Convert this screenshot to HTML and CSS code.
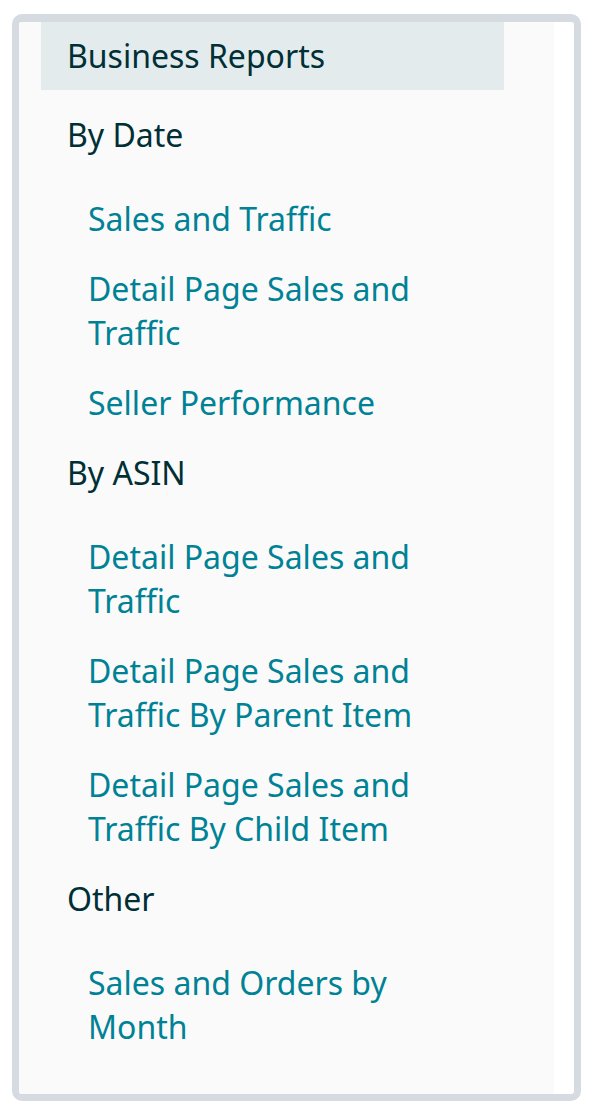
FILE: index.html
```html
<!DOCTYPE html>
<html lang="en">
<head>
    <meta charset="UTF-8">
    <meta name="viewport" content="width=device-width, initial-scale=1.0">
    <title>Business Reports</title>
    <link rel="stylesheet" href="styles.css">
</head>
<body>
    <div class="frame">
        <div class="panel">
            <div class="panel-title">Business Reports</div>

            <div class="groups">
                <div class="group">
                    <h3 class="group-title">By Date</h3>
                    <ul class="links">
                        <li><a href="#">Sales and Traffic</a></li>
                        <li><a href="#">Detail Page Sales and Traffic</a></li>
                        <li><a href="#">Seller Performance</a></li>
                    </ul>
                </div>

                <div class="group">
                    <h3 class="group-title">By ASIN</h3>
                    <ul class="links">
                        <li><a href="#">Detail Page Sales and Traffic</a></li>
                        <li><a href="#">Detail Page Sales and Traffic By Parent Item</a></li>
                        <li><a href="#">Detail Page Sales and Traffic By Child Item</a></li>
                    </ul>
                </div>

                <div class="group">
                    <h3 class="group-title">Other</h3>
                    <ul class="links">
                        <li><a href="#">Sales and Orders by Month</a></li>
                    </ul>
                </div>
            </div>
        </div>
    </div>
</body>
</html>
```

FILE: styles.css
```css
body {
    margin: 0;
    padding: 0;
    background-color: #fff;
    font-family: "Noto Sans", "Open Sans", sans-serif;
    font-size: 32px;
    line-height: 44px;
}
.frame {
    margin: 14px 12px 0 12px;
    height: 1072px;
    border: 7px solid #d6dae1;
    border-top-width: 8px;
    border-radius: 10px;
    background-color: #fff;
    overflow: hidden;
}
.panel {
    width: 535px;
    height: 100%;
    background-color: #fafafa;
}
.panel-title {
    margin-left: 22px;
    width: 463px;
    height: 68px;
    padding-left: 26px;
    box-sizing: border-box;
    display: flex;
    align-items: center;
    background-color: #e3ebed;
    color: #002f36;
}
.groups {
    padding: 23px 0 0 48px;
}
.group-title {
    margin: 0 0 27px 0;
    font-size: 32px;
    font-weight: normal;
    color: #002f36;
}
.links {
    list-style: none;
    margin: 0 0 13px 0;
    padding: 0 0 0 21px;
    width: 350px;
}
.links li {
    padding: 13px 0;
}
.links a {
    color: #008296;
    text-decoration: none;
}
```
